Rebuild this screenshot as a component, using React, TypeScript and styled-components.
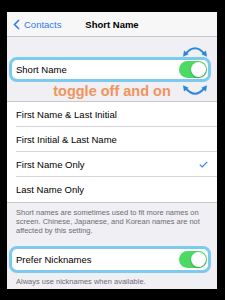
import React from "react";
import styled, { createGlobalStyle } from "styled-components";

const GlobalStyle = createGlobalStyle`
  html, body {
    margin: 0;
    padding: 0;
    background: #000;
  }
  body {
    width: 225px;
    height: 300px;
    overflow: hidden;
    font-family: "Liberation Sans", Arial, sans-serif;
  }
`;

const Screen = styled.div`
  margin: 12px 0 0 7px;
  width: 210px;
  height: 277px;
  background: #efeff4;
  overflow: hidden;
`;

const NavBar = styled.div`
  height: 24px;
  display: grid;
  grid-template-columns: 1fr auto 1fr;
  align-items: center;
  background: #f7f7f8;
  border-bottom: 0.5px solid #c8c7cc;
`;

const Back = styled.div`
  display: flex;
  align-items: center;
  gap: 4px;
  padding-left: 6px;
  color: #2f7cf0;
  font-size: 9.5px;
`;

const Title = styled.div`
  font-size: 9.5px;
  font-weight: 700;
  color: #000;
`;

const ArrowGap = styled.div`
  height: 20px;
  display: flex;
  justify-content: flex-end;
  align-items: flex-end;
  padding-right: 9px;
`;

const Highlight = styled.div<{ $tall?: number }>`
  box-sizing: border-box;
  height: ${(p) => p.$tall ?? 25}px;
  margin: 0 6px 0 2px;
  border: 3px solid #7ccaee;
  border-radius: 8px;
  background: #fff;
  display: flex;
  align-items: center;
  justify-content: space-between;
  padding: 0 1px 0 4px;
  font-size: 9.5px;
  color: #000;
`;

const Toggle = styled.div`
  position: relative;
  width: 28px;
  height: 17px;
  border-radius: 9px;
  background: #4cd964;
  &::after {
    content: "";
    position: absolute;
    right: 1px;
    top: 1px;
    width: 15px;
    height: 15px;
    border-radius: 50%;
    background: #fff;
    box-shadow: 0 1px 2px rgba(0, 0, 0, 0.3);
  }
`;

const Annotation = styled.div`
  height: 19px;
  display: grid;
  grid-template-columns: 1fr auto 1fr;
  align-items: center;
`;

const Hint = styled.div`
  grid-column: 2;
  color: #ef955b;
  font-size: 14.5px;
  font-weight: 700;
  line-height: 15px;
`;

const ArrowCell = styled.div`
  grid-column: 3;
  justify-self: end;
  padding-right: 9px;
  display: flex;
`;

const List = styled.div`
  background: #fff;
  border-top: 0.5px solid #c8c7cc;
  border-bottom: 0.5px solid #c8c7cc;
`;

const Row = styled.div<{ $last?: boolean }>`
  box-sizing: border-box;
  height: 25px;
  display: flex;
  align-items: center;
  justify-content: space-between;
  margin-left: 9px;
  padding-right: 9px;
  font-size: 9.5px;
  color: #000;
  border-bottom: ${(p) => (p.$last ? "none" : "0.5px solid #d6d6da")};
`;

const Footer = styled.div<{ $top: number }>`
  padding: ${(p) => p.$top}px 9px 0;
  font-size: 7.5px;
  line-height: 9px;
  color: #6d6d72;
`;

const Spacer = styled.div<{ $h: number }>`
  height: ${(p) => p.$h}px;
`;

const CurveArrow = ({ flip }: { flip?: boolean }) => (
  <svg
    width="26"
    height="13"
    viewBox="0 0 26 13"
    style={flip ? { transform: "scaleY(-1)" } : undefined}
  >
    <path d="M3.5 10 Q13 -1.5 22.5 10" fill="none" stroke="#2b88d8" strokeWidth="2" />
    <polygon points="1,12.8 2,6.6 6.6,10.3" fill="#2b88d8" />
    <polygon points="25,12.8 24,6.6 19.4,10.3" fill="#2b88d8" />
  </svg>
);

const Chevron = () => (
  <svg width="7" height="11" viewBox="0 0 7 11">
    <polyline points="6,1 1.5,5.5 6,10" fill="none" stroke="#2f7cf0" strokeWidth="1.6" />
  </svg>
);

const Check = () => (
  <svg width="9" height="7" viewBox="0 0 9 7">
    <polyline points="0.8,3.6 3.2,6 8.2,0.8" fill="none" stroke="#2f7cf0" strokeWidth="1.2" />
  </svg>
);

const options = [
  "First Name & Last Initial",
  "First Initial & Last Name",
  "First Name Only",
  "Last Name Only",
];

export default function App() {
  return (
    <>
      <GlobalStyle />
      <Screen>
        <NavBar>
          <Back>
            <Chevron />
            Contacts
          </Back>
          <Title>Short Name</Title>
          <div />
        </NavBar>
        <ArrowGap>
          <CurveArrow />
        </ArrowGap>
        <Highlight>
          Short Name
          <Toggle />
        </Highlight>
        <Annotation>
          <Hint>toggle off and on</Hint>
          <ArrowCell>
            <CurveArrow flip />
          </ArrowCell>
        </Annotation>
        <List>
          {options.map((o, i) => (
            <Row key={o} $last={i === options.length - 1}>
              {o}
              {o === "First Name Only" && <Check />}
            </Row>
          ))}
        </List>
        <Footer $top={5}>
          Short names are sometimes used to fit more names on
          <br />
          screen. Chinese, Japanese, and Korean names are not
          <br />
          affected by this setting.
        </Footer>
        <Spacer $h={11} />
        <Highlight $tall={27}>
          Prefer Nicknames
          <Toggle />
        </Highlight>
        <Footer $top={4}>Always use nicknames when available.</Footer>
      </Screen>
    </>
  );
}
